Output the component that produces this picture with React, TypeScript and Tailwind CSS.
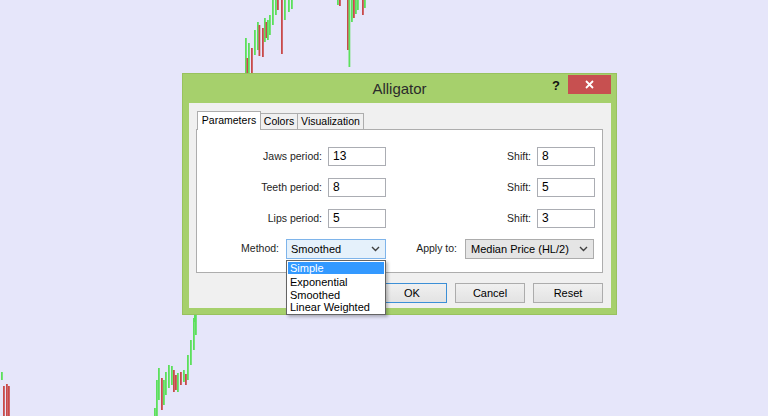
import type { ReactNode } from "react";

// ──────────────────────────────────────────────
// Chart bars behind the dialog
// ──────────────────────────────────────────────

type Bar = [number, number, number, "g" | "r"];

const bars: Bar[] = [
  // top cluster
  [245, 38, 73, "g"],
  [246.5, 58, 73, "r"],
  [248, 43, 73, "g"],
  [251, 48, 73, "r"],
  [254, 30, 55, "g"],
  [257, 22, 50, "g"],
  [258.5, 25, 56, "r"],
  [262, 28, 57, "r"],
  [264, 18, 42, "g"],
  [265.5, 22, 38, "r"],
  [267, 20, 40, "g"],
  [269, 15, 35, "g"],
  [272, 0, 25, "g"],
  [275, 0, 15, "g"],
  [277, 0, 10, "r"],
  [281, 0, 54, "r"],
  [284, 0, 20, "g"],
  [288, 0, 12, "g"],
  [291, 0, 9, "g"],
  [337, 0, 5, "g"],
  [339, 0, 6, "r"],
  [347, 0, 50, "r"],
  [348.5, 0, 67, "g"],
  [351, 0, 22, "g"],
  [353, 0, 18, "r"],
  [355, 0, 14, "g"],
  [357, 0, 10, "g"],
  [362, 0, 15, "r"],
  [364, 0, 8, "g"],
  // bottom left
  [1, 372, 380, "g"],
  [3, 386, 416, "r"],
  [6, 384, 416, "r"],
  [8, 386, 416, "r"],
  // bottom cluster
  [154, 408, 416, "g"],
  [156, 380, 416, "g"],
  [158, 368, 400, "g"],
  [161, 378, 410, "r"],
  [163, 380, 405, "g"],
  [165, 372, 395, "g"],
  [168, 365, 388, "g"],
  [171, 366, 385, "g"],
  [173, 370, 392, "r"],
  [175, 375, 390, "r"],
  [177, 373, 392, "g"],
  [180, 372, 385, "r"],
  [183, 370, 382, "g"],
  [185, 374, 385, "r"],
  [187, 355, 380, "g"],
  [190, 340, 365, "g"],
  [193, 318, 350, "g"],
  [195, 304, 335, "g"],
  [194, 314, 322, "g"],
];

function Chart() {
  return (
    <svg
      className="absolute inset-0"
      width={768}
      height={416}
      viewBox="0 0 768 416"
    >
      {bars.map(([x, y1, y2, c], i) => (
        <rect
          key={i}
          x={x}
          y={y1}
          width={1.8}
          height={y2 - y1}
          fill={c === "g" ? "#5ce05c" : "#c94a4a"}
        />
      ))}
    </svg>
  );
}

// ──────────────────────────────────────────────
// Small widgets
// ──────────────────────────────────────────────

function Chevron() {
  return (
    <svg width="9" height="6" viewBox="0 0 9 6" className="shrink-0">
      <path d="M1 1 L4.5 4.5 L8 1" fill="none" stroke="#404040" strokeWidth="1.4" />
    </svg>
  );
}

function Field({ value }: { value: string }) {
  return (
    <div className="w-[58px] h-[19px] bg-white border border-[#abadb3] pl-[4px] text-[12px] leading-[17px] text-black">
      {value}
    </div>
  );
}

function Label({ w, pr, children }: { w: string; pr: string; children: ReactNode }) {
  return (
    <div className={`${w} ${pr} text-right text-[10.5px] text-[#1e1e1e]`}>{children}</div>
  );
}

function Button({ label, primary }: { label: string; primary?: boolean }) {
  return (
    <div
      className={`w-[70px] h-[20px] flex items-center justify-center text-[11px] text-black bg-gradient-to-b from-[#f0f0f0] to-[#e3e3e3] border ${
        primary ? "border-[#3c8fd6]" : "border-[#acacac]"
      }`}
    >
      {label}
    </div>
  );
}

// ──────────────────────────────────────────────
// Dialog
// ──────────────────────────────────────────────

function Dialog() {
  return (
    <div className="absolute left-[182px] top-[73px] w-[435px] h-[242px] bg-[#a6d06c] border border-[#98c25e] flex flex-col">
      {/* Title bar */}
      <div className="relative h-[29px] flex items-center justify-center">
        <span className="text-[15px] text-[#2b2b2b] mt-[1px]">Alligator</span>
        <span className="absolute left-[369px] top-[2px] text-[13px] font-bold text-[#111]">?</span>
        <div className="absolute left-[385px] top-[1px] w-[43px] h-[19px] bg-[#c75050] flex items-center justify-center">
          <svg width="9" height="9" viewBox="0 0 9 9">
            <path d="M1 1 L8 8 M8 1 L1 8" stroke="#fff" strokeWidth="1.8" />
          </svg>
        </div>
      </div>

      {/* Client area */}
      <div className="ml-[6px] w-[422px] h-[205px] bg-[#f0f0f0] pt-[8px] pl-[7px]">
        {/* Tabs */}
        <div className="flex items-end h-[18px] pl-[1px] relative z-10">
          <div className="w-[64px] h-[19px] bg-white border border-b-0 border-[#adadad] text-[10.5px] flex items-center justify-center text-black mb-[-1px]">
            Parameters
          </div>
          <div className="w-[37px] h-[16px] bg-[#f0f0f0] border border-l-0 border-b-0 border-[#adadad] text-[10.5px] flex items-center justify-center text-black">
            Colors
          </div>
          <div className="w-[66px] h-[16px] bg-[#f0f0f0] border border-l-0 border-b-0 border-[#adadad] text-[10.5px] flex items-center justify-center text-black">
            Visualization
          </div>
        </div>

        {/* Panel */}
        <div className="w-[407px] h-[144px] bg-white border border-[#adadad] pt-[17px]">
          <div className="flex items-center h-[19px]">
            <Label w="w-[131px]" pr="pr-[6px]">Jaws period:</Label>
            <Field value="13" />
            <Label w="w-[151px]" pr="pr-[6px]">Shift:</Label>
            <Field value="8" />
          </div>
          <div className="flex items-center h-[19px] mt-[12px]">
            <Label w="w-[131px]" pr="pr-[6px]">Teeth period:</Label>
            <Field value="8" />
            <Label w="w-[151px]" pr="pr-[6px]">Shift:</Label>
            <Field value="5" />
          </div>
          <div className="flex items-center h-[19px] mt-[12px]">
            <Label w="w-[131px]" pr="pr-[6px]">Lips period:</Label>
            <Field value="5" />
            <Label w="w-[151px]" pr="pr-[6px]">Shift:</Label>
            <Field value="3" />
          </div>
          <div className="flex items-center h-[20px] mt-[11px]">
            <Label w="w-[89px]" pr="pr-[7px]">Method:</Label>
            <div className="relative z-20">
              <div className="w-[100px] h-[20px] bg-[#e5f1fb] border border-[#7eb4ea] flex items-center justify-between pl-[4px] pr-[5px] text-[11px] text-black">
                <span>Smoothed</span>
                <Chevron />
              </div>
              <div className="absolute left-0 top-[21px] w-[100px] bg-white border border-[#646464] shadow-[2px_2px_3px_rgba(0,0,0,0.25)] text-[11px] leading-[12.3px] text-black">
                <div className="bg-[#3399ff] text-white pl-[2px] mx-[1px] mt-[1px]">Simple</div>
                <div className="pl-[3px] mt-[2px]">Exponential</div>
                <div className="pl-[3px]">Smoothed</div>
                <div className="pl-[3px] mb-[1px]">Linear Weighted</div>
              </div>
            </div>
            <Label w="w-[79px]" pr="pr-[8px]">Apply to:</Label>
            <div className="w-[129px] h-[20px] bg-[#e5e5e5] border border-[#acacac] flex items-center justify-between pl-[5px] pr-[5px] text-[11px] text-black">
              <span>Median Price (HL/2)</span>
              <Chevron />
            </div>
          </div>
        </div>

        {/* Buttons */}
        <div className="flex justify-end gap-[8px] w-[407px] mt-[10px]">
          <Button label="OK" primary />
          <Button label="Cancel" />
          <Button label="Reset" />
        </div>
      </div>
    </div>
  );
}

export default function App() {
  return (
    <div
      className="relative w-[768px] h-[416px] overflow-hidden bg-[#e6e6fa]"
      style={{ fontFamily: '"Liberation Sans", Arial, sans-serif' }}
    >
      <Chart />
      <Dialog />
    </div>
  );
}
